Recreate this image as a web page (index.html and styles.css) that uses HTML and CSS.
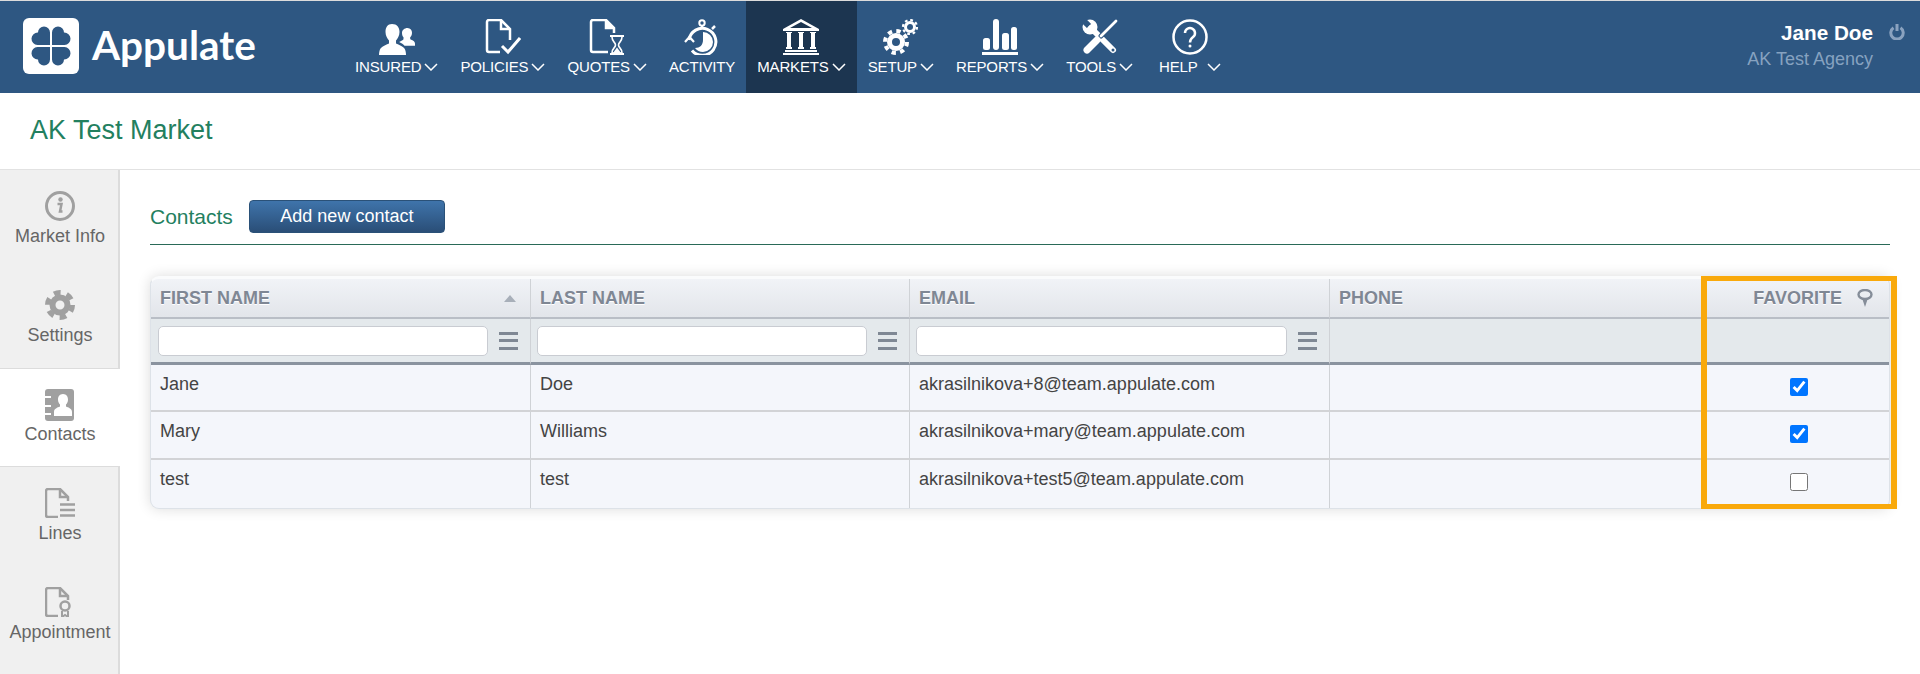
FILE: index.html
```html
<!DOCTYPE html>
<html lang="en">
<head>
<meta charset="utf-8">
<title>AK Test Market</title>
<link rel="stylesheet" href="styles.css">
</head>
<body>
<header class="topbar">
  <div class="brand">
    <svg class="logo" viewBox="0 0 56 56"><rect width="56" height="56" rx="6" fill="#fff"/><g fill="#2e5782"><path d="M27.500 27.500V15A6 6 0 0 0 15.500 15A6 6 0 0 0 15 27.500Z" transform="translate(-.5 -.5)"/><path d="M27.500 27.500V15A6 6 0 0 0 15.500 15A6 6 0 0 0 15 27.500Z" transform="matrix(-1 0 0 1 56.500 -.5)"/><path d="M27.500 27.500V15A6 6 0 0 0 15.500 15A6 6 0 0 0 15 27.500Z" transform="matrix(1 0 0 -1 -.5 56.500)"/><path d="M27.500 27.500V15A6 6 0 0 0 15.500 15A6 6 0 0 0 15 27.500Z" transform="matrix(-1 0 0 -1 56.500 56.500)"/></g></svg>
    <span class="brand-name">Appulate</span>
  </div>
  <nav class="mainnav">
    <a class="navitem">
      <svg class="navicon" viewBox="0 0 36 36" fill="#fff"><path d="M13 5c5 0 7.500 3.500 7.500 8 0 4-2 6.500-3.500 8.500v3c3 1.500 7 2.500 8.500 5 1 1.500 1.500 4 1.500 6.500H0c0-2.500.5-5 1.500-6.500 1.500-2.500 5.500-3.500 8.500-5v-3c-1.500-2-3.500-4.500-3.500-8.500 0-4.500 2-8 6.500-8z"/><path d="M28.500 9c3 0 4.500 2.200 4.500 4.700 0 2-.8 3.500-1.800 4.500v2c1.800 1 4.800 1.500 4.800 4.500v2H25.500c-1-1.500-3-2.500-5-3.500v-.5c1.500-.8 3.500-1.500 4-2.500v-2c-1-1-1.500-2.500-1.500-4.500C23 11.200 25.500 9 28.500 9z"/></svg>
      <span class="navlabel">INSURED<svg class="chev" viewBox="0 0 14 8"><path d="M1 1l6 6 6-6"/></svg></span>
    </a>
    <a class="navitem">
      <svg class="navicon" viewBox="0 0 36 36" fill="none" stroke="#fff" stroke-width="2.500"><path d="M15 33H4a2 2 0 0 1-2-2V3a2 2 0 0 1 2-2h12l9 9v11"/><path d="M16 1v9h9"/><path d="M17 27l6 6 12-14" stroke-width="3"/></svg>
      <span class="navlabel">POLICIES<svg class="chev" viewBox="0 0 14 8"><path d="M1 1l6 6 6-6"/></svg></span>
    </a>
    <a class="navitem">
      <svg class="navicon" viewBox="0 0 36 36" fill="none" stroke="#fff" stroke-width="2.500"><path d="M19 33H4a2 2 0 0 1-2-2V3a2 2 0 0 1 2-2h13l8 8v5"/><path d="M17 1v8h8" fill="#fff"/><path d="M21 17h14M21 35h14" stroke-width="2"/><path d="M23 18c0 5 3.500 5 3.500 8S23 29 23 34h10c0-5-3.500-5-3.500-8s3.500-3 3.500-8" stroke-width="1.600"/><path d="M24 34l4-5.500 4 5.500z" fill="#fff" stroke="none"/></svg>
      <span class="navlabel">QUOTES<svg class="chev" viewBox="0 0 14 8"><path d="M1 1l6 6 6-6"/></svg></span>
    </a>
    <a class="navitem">
      <svg class="navicon" viewBox="0 0 36 36" fill="none" stroke="#fff" stroke-width="2.500"><circle cx="18" cy="4" r="2.700" stroke-width="2"/><path d="M18 7v3" stroke-width="2"/><path d="M5 21A13.500 13.500 0 1 1 8 31.500" stroke-width="3"/><path d="M1 23l4.500-5 4.500 5" stroke-width="2.200"/><path d="M28 10l3-3" stroke-width="2.500"/><path d="M19 13a10 10 0 0 1 0 20 10 10 0 0 1-8-4c5 0 8-3 8-8z" fill="#fff" stroke="none"/></svg>
      <span class="navlabel">ACTIVITY</span>
    </a>
    <a class="navitem active">
      <svg class="navicon" viewBox="0 0 36 36" fill="#fff"><path d="M18 0L0 10v2h36v-2zM18 3l11 6H7z"/><path d="M3 13h6v1H8v14h1v2H3v-2h1V14H3zM15 13h6v1h-1v14h1v2h-6v-2h1V14h-1zM27 13h6v1h-1v14h1v2h-6v-2h1V14h-1z"/><path d="M2 31h32v2H2zM0 34h36v2H0z"/></svg>
      <span class="navlabel">MARKETS<svg class="chev" viewBox="0 0 14 8"><path d="M1 1l6 6 6-6"/></svg></span>
    </a>
    <a class="navitem">
      <svg class="navicon" viewBox="0 0 36 36" fill="none" stroke="#fff"><circle cx="13" cy="23" r="6.500" stroke-width="5"/><circle cx="13" cy="23" r="11" stroke-width="4" stroke-dasharray="4.320 4.320"/><circle cx="27" cy="8" r="4.500" stroke-width="3"/><circle cx="27" cy="8" r="7" stroke-width="2.200" stroke-dasharray="2.750 2.750"/></svg>
      <span class="navlabel">SETUP<svg class="chev" viewBox="0 0 14 8"><path d="M1 1l6 6 6-6"/></svg></span>
    </a>
    <a class="navitem">
      <svg class="navicon" viewBox="0 0 36 36" fill="#fff"><rect x="1" y="19" width="7" height="12" rx="2.500"/><rect x="11" y="0" width="6" height="31" rx="3"/><rect x="20" y="14" width="7" height="17" rx="2.500"/><rect x="29" y="8" width="6" height="23" rx="2.500"/><rect y="33" width="36" height="3"/></svg>
      <span class="navlabel">REPORTS<svg class="chev" viewBox="0 0 14 8"><path d="M1 1l6 6 6-6"/></svg></span>
    </a>
    <a class="navitem">
      <svg class="navicon" viewBox="0 0 36 36" fill="none" stroke="#fff" stroke-linecap="round"><circle cx="8" cy="8" r="7.500" fill="#fff" stroke="none"/><path d="M1 1l6 6" stroke="#2e5782" stroke-width="6" stroke-linecap="butt"/><path d="M9 9l22 22" stroke-width="6"/><circle cx="31" cy="31" r="1.500" fill="#2e5782" stroke="none"/><path d="M34 2L19 17" stroke="#2e5782" stroke-width="5"/><path d="M34 2L19 17" stroke-width="2.800"/><path d="M5 31l10-10" stroke-width="7"/></svg>
      <span class="navlabel">TOOLS<svg class="chev" viewBox="0 0 14 8"><path d="M1 1l6 6 6-6"/></svg></span>
    </a>
    <a class="navitem navitem-help">
      <svg class="navicon" viewBox="0 0 36 36" fill="none" stroke="#fff" stroke-width="2.500"><circle cx="18" cy="18" r="16.500"/><path d="M13 14a5 5 0 1 1 8 4c-2 1.500-3 2.500-3 5.500"/><circle cx="18" cy="27" r="1.500" fill="#fff" stroke="none"/></svg>
      <span class="navlabel">HELP<svg class="chev chev-wide" viewBox="0 0 14 8"><path d="M1 1l6 6 6-6"/></svg></span>
    </a>
  </nav>
  <div class="account">
    <div class="account-text">
      <div class="user-name">Jane Doe</div>
      <div class="agency">AK Test Agency</div>
    </div>
    <svg class="power" viewBox="0 0 16 16" fill="none" stroke="#8aa2bf" stroke-width="3"><path d="M4.500 3.800a6.200 6.200 0 1 0 7 0"/><path d="M8 0v7"/></svg>
  </div>
</header>

<div class="titlebar"><h1 class="title">AK Test Market</h1></div>

<div class="workspace">
  <aside class="sidebar">
    <a class="tab">
      <svg class="tabicon" viewBox="0 0 30 30" fill="none" stroke="#a0a0a0" stroke-width="3"><circle cx="15" cy="15" r="13.500"/><circle cx="15.500" cy="8.500" r="2.200" fill="#a0a0a0" stroke="none"/><path d="M12.500 13h4l-1.500 7.500h2.500" stroke-width="2.500"/></svg>
      <span class="tablabel">Market Info</span>
    </a>
    <a class="tab">
      <svg class="tabicon" viewBox="0 0 30 30" fill="none" stroke="#a0a0a0"><circle cx="15" cy="15" r="7.500" stroke-width="6"/><circle cx="15" cy="15" r="12.500" stroke-width="5" stroke-dasharray="6.800 6.290"/></svg>
      <span class="tablabel">Settings</span>
    </a>
    <a class="tab current">
      <svg class="tabicon tabicon-tall" viewBox="0 0 30 32"><rect width="29" height="32" rx="3" fill="#a0a0a0"/><path d="M0 7h6v2H0zM0 16h6v2H0zM0 24h6v2H0z" fill="#fff"/><path d="M18 5c3.500 0 5 2.800 5 5.500 0 2.500-1 4-2 5v2c2.500 1.200 6 2 6 5.500v4H9v-4c0-3.500 3.500-4.300 6-5.500v-2c-1-1-2-2.500-2-5C13 7.800 14.500 5 18 5z" fill="#fff"/></svg>
      <span class="tablabel">Contacts</span>
    </a>
    <a class="tab">
      <svg class="tabicon" viewBox="0 0 30 30" fill="none" stroke="#a0a0a0" stroke-width="2.500"><path d="M13 29H3a2 2 0 0 1-2-2V3a2 2 0 0 1 2-2h12l8 8v4"/><path d="M15 1v8h8"/><path d="M15 16.500h15M15 22h15M15 27.500h15"/></svg>
      <span class="tablabel">Lines</span>
    </a>
    <a class="tab">
      <svg class="tabicon" viewBox="0 0 30 30" fill="none" stroke="#a0a0a0" stroke-width="2.500"><path d="M13 29H3a2 2 0 0 1-2-2V3a2 2 0 0 1 2-2h12l8 8v4"/><path d="M15 1v8h8"/><circle cx="20" cy="19" r="4.500"/><path d="M17 24v6l3-2 3 2v-6" stroke-width="2"/></svg>
      <span class="tablabel">Appointment</span>
    </a>
  </aside>

  <main class="content">
    <div class="section-head">
      <h2 class="section-title">Contacts</h2>
      <button class="add-btn" type="button">Add new contact</button>
    </div>
    <div class="grid-wrap">
      <div class="grid">
        <table class="table">
          <colgroup><col class="c1"><col class="c2"><col class="c3"><col class="c4"><col class="c5"></colgroup>
          <thead>
            <tr class="head-row">
              <th><span class="th-inner">FIRST NAME<span class="sort"></span></span></th>
              <th>LAST NAME</th>
              <th>EMAIL</th>
              <th>PHONE</th>
              <th><span class="th-fav">FAVORITE<svg class="pin" viewBox="0 0 16 18"><ellipse cx="8" cy="5.500" rx="6.500" ry="4.500" fill="none" stroke="#858d99" stroke-width="2.400"/><path d="M5.500 10.500h5L8 18z" fill="#858d99"/></svg></span></th>
            </tr>
            <tr class="filter-row">
              <td><div class="filter"><input class="filter-input" type="text"><span class="burger"><i></i><i></i><i></i></span></div></td>
              <td><div class="filter"><input class="filter-input" type="text"><span class="burger"><i></i><i></i><i></i></span></div></td>
              <td><div class="filter"><input class="filter-input" type="text"><span class="burger"><i></i><i></i><i></i></span></div></td>
              <td></td>
              <td></td>
            </tr>
          </thead>
          <tbody>
            <tr><td>Jane</td><td>Doe</td><td>akrasilnikova+8@team.appulate.com</td><td></td><td class="check-cell"><input class="check" type="checkbox" checked></td></tr>
            <tr><td>Mary</td><td>Williams</td><td>akrasilnikova+mary@team.appulate.com</td><td></td><td class="check-cell"><input class="check" type="checkbox" checked></td></tr>
            <tr><td>test</td><td>test</td><td>akrasilnikova+test5@team.appulate.com</td><td></td><td class="check-cell"><input class="check" type="checkbox"></td></tr>
          </tbody>
        </table>
      </div>
      <div class="highlight"></div>
    </div>
  </main>
</div>
</body>
</html>
```
FILE: styles.css
```css
* { box-sizing: border-box; }
html, body { margin: 0; height: 100%; overflow: hidden; }
body {
  display: flex;
  flex-direction: column;
  font-family: "Liberation Sans", Arial, sans-serif;
  color: #444;
  background: #fff;
}

/* top bar */
.topbar {
  flex: 0 0 93px;
  display: flex;
  align-items: stretch;
  background: #2e5782;
  border-top: 1px solid #dcdcdc;
  color: #fff;
}
.brand {
  width: 344px;
  padding-left: 23px;
  display: flex;
  align-items: flex-start;
  gap: 13px;
}
.logo { width: 56px; height: 56px; margin-top: 17px; display: block; }
.brand-name {
  font-family: Lato, sans-serif;
  font-weight: 700;
  font-size: 40.500px;
  line-height: 46px;
  margin-top: 21px;
}
.mainnav { display: flex; flex: 1; }
.navitem {
  display: flex;
  flex-direction: column;
  align-items: center;
  padding: 18px 11px 0;
}
.navitem.active { background: #1c3550; }
.navitem-help { padding-left: 15px; }
.navicon { width: 36px; height: 36px; display: block; }
.navlabel {
  display: flex;
  align-items: center;
  font-size: 15px;
  line-height: 18px;
  margin-top: 3px;
  letter-spacing: -.15px;
  white-space: nowrap;
}
.chev { width: 14px; height: 8px; margin-left: 3px; fill: none; stroke: #fff; stroke-width: 1.500; }
.chev-wide { margin-left: 9px; }
.account {
  display: flex;
  align-items: flex-start;
  padding: 19px 15px 0 0;
  gap: 16px;
}
.account-text { text-align: right; }
.user-name { font-size: 20.700px; font-weight: 700; line-height: 25px; }
.agency { font-size: 18px; line-height: 24px; margin-top: 2px; color: #86a2c0; }
.power { width: 16px; height: 16px; margin-top: 4px; }

/* title */
.titlebar {
  flex: 0 0 77px;
  border-bottom: 1px solid #e2e2e2;
  padding-left: 30px;
  display: flex;
  align-items: center;
}
.title { margin: 0 0 1px; font-size: 27px; font-weight: 400; color: #23805f; }

/* workspace */
.workspace { flex: 1; display: flex; min-height: 0; }
.sidebar {
  flex: 0 0 120px;
  background: #f0f0f0;
  border-right: 2px solid #dcdcdc;
}
.tab {
  height: 99px;
  display: flex;
  flex-direction: column;
  align-items: center;
  padding: 21px 0 0 2px;
}
.tab.current {
  background: #fff;
  margin-right: -2px;
  border-top: 1px solid #dcdcdc;
  border-bottom: 1px solid #dcdcdc;
  padding: 20px 0 0;
}
.tabicon { width: 30px; height: 30px; display: block; }
.tabicon-tall { height: 32px; margin-bottom: -2px; }
.tablabel { font-size: 18px; line-height: 22px; margin-top: 4px; color: #666; white-space: nowrap; }

/* content */
.content { flex: 1; padding: 30px 30px 0; min-width: 0; }
.section-head {
  display: flex;
  align-items: center;
  height: 45px;
  padding-bottom: 11px;
  border-bottom: 1px solid #2a6a58;
  gap: 16px;
}
.section-title { margin: 0; font-size: 21px; font-weight: 400; color: #23805f; }
.add-btn {
  width: 196px;
  height: 33px;
  padding: 0;
  font: 18px "Liberation Sans", Arial, sans-serif;
  color: #fff;
  background: linear-gradient(#3f74ab, #2a4e77);
  border: 1px solid #2a5178;
  border-radius: 4px;
}

/* grid */
.grid-wrap { position: relative; margin-top: 31px; }
.grid {
  height: 233px;
  background: #f4f6fb;
  border: 1px solid #dde2e8;
  border-top: 3px solid #fafbfc;
  border-radius: 9px;
  box-shadow: 0 0 14px rgba(0, 0, 0, .14);
  overflow: hidden;
}
.table {
  width: 100%;
  table-layout: fixed;
  border-collapse: separate;
  border-spacing: 0;
  font-size: 18px;
  color: #444;
}
.c1 { width: 380px; }
.c2 { width: 379px; }
.c3 { width: 420px; }
.c4 { width: 377px; }
.table th, .table td { padding: 0; border-right: 1px solid #cfd2d6; }
.table tr > :last-child { border-right: 0; }
.head-row th {
  height: 40px;
  padding: 0 9px;
  text-align: left;
  font-size: 18px;
  font-weight: 700;
  color: #7f8794;
  text-shadow: 0 1px 0 #fff;
  background: linear-gradient(#f1f3f7, #e2e5ea);
  border-bottom: 2px solid #b9bec6;
}
.th-inner { display: flex; align-items: center; justify-content: space-between; padding-right: 5px; }
.sort { width: 0; height: 0; border: 6px solid transparent; border-top: 0; border-bottom: 7px solid #a8afb9; }
.th-fav { display: flex; align-items: center; justify-content: flex-end; gap: 15px; padding-right: 7px; }
.pin { width: 16px; height: 18px; }
.filter-row td {
  height: 46px;
  background: #e4e9ec;
  border-bottom: 3px solid #8a939f;
}
.filter { display: flex; align-items: center; gap: 11px; padding: 0 12px 0 6px; }
.filter-row td:first-child .filter { padding-left: 7px; }
.filter-input {
  flex: 1;
  min-width: 0;
  height: 30px;
  border: 1px solid #c9ccd2;
  border-radius: 5px;
  background: #fff;
  padding: 0 4px;
}
.burger { flex: 0 0 19px; display: flex; flex-direction: column; gap: 4.500px; }
.burger i { display: block; height: 3px; background: #7f8894; }
tbody td {
  height: 48px;
  padding: 8px 9px 0 !important;
  vertical-align: top;
  line-height: 22px;
  border-bottom: 2px solid #d2d3d6;
}
tbody tr:first-child td { height: 47px; }
tbody tr:last-child td { border-bottom: 0; }
.check-cell { text-align: center; padding: 13px 0 0 2px !important; }
.check { width: 18px; height: 18px; margin: 0; display: inline-block; vertical-align: top; }
.highlight {
  position: absolute;
  top: 0;
  left: 1551px;
  width: 196px;
  height: 233px;
  border-style: solid;
  border-width: 5px 6px;
  border-color: #f9a90b;
  pointer-events: none;
}
```
